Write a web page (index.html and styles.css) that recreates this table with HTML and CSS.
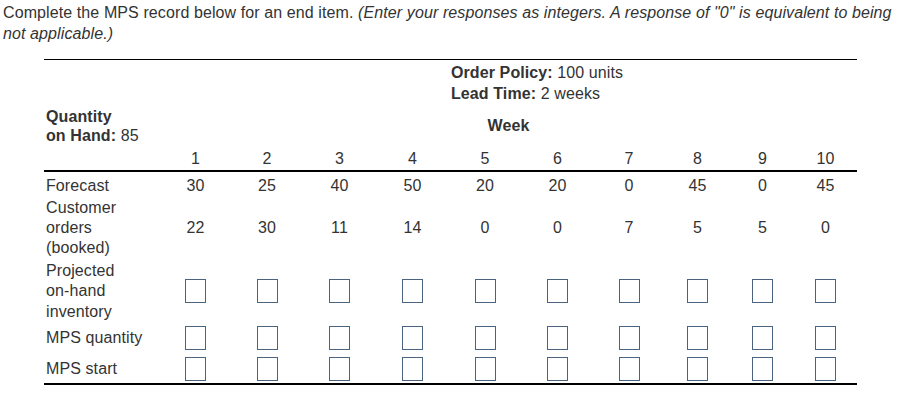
FILE: index.html
```html
<!DOCTYPE html>
<html>
<head>
<meta charset="utf-8">
<link rel="stylesheet" href="styles.css">
</head>
<body>
<p class="intro">Complete the MPS record below for an end item. <em>(Enter your responses as integers. A response of "0" is equivalent to being not applicable.)</em></p>
<table class="mps">
  <colgroup>
    <col class="c-label">
    <col class="c71"><col class="c72"><col class="c73"><col class="c73">
    <col class="c72"><col class="c73"><col class="c70"><col class="c67">
    <col class="c63"><col class="c63">
  </colgroup>
  <tr class="r-policy">
    <td></td>
    <td colspan="4"></td>
    <td colspan="6" class="policy"><b>Order Policy:</b> 100 units<br><b>Lead Time:</b> 2 weeks</td>
  </tr>
  <tr class="r-week">
    <td class="label"><b>Quantity<br>on Hand:</b> 85</td>
    <td colspan="10" class="week"><b>Week</b></td>
  </tr>
  <tr class="r-nums">
    <td></td>
    <td>1</td><td>2</td><td>3</td><td>4</td><td>5</td><td>6</td><td>7</td><td>8</td><td>9</td><td>10</td>
  </tr>
  <tr class="r-forecast">
    <td class="label">Forecast</td>
    <td>30</td><td>25</td><td>40</td><td>50</td><td>20</td><td>20</td><td>0</td><td>45</td><td>0</td><td>45</td>
  </tr>
  <tr class="r-orders">
    <td class="label">Customer<br>orders<br>(booked)</td>
    <td>22</td><td>30</td><td>11</td><td>14</td><td>0</td><td>0</td><td>7</td><td>5</td><td>5</td><td>0</td>
  </tr>
  <tr class="r-proj">
    <td class="label">Projected<br>on-hand<br>inventory</td>
    <td><span class="box"></span></td><td><span class="box"></span></td><td><span class="box"></span></td><td><span class="box"></span></td><td><span class="box"></span></td><td><span class="box"></span></td><td><span class="box"></span></td><td><span class="box"></span></td><td><span class="box"></span></td><td><span class="box"></span></td>
  </tr>
  <tr class="r-box">
    <td class="label">MPS quantity</td>
    <td><span class="box"></span></td><td><span class="box"></span></td><td><span class="box"></span></td><td><span class="box"></span></td><td><span class="box"></span></td><td><span class="box"></span></td><td><span class="box"></span></td><td><span class="box"></span></td><td><span class="box"></span></td><td><span class="box"></span></td>
  </tr>
  <tr class="r-box r-last">
    <td class="label">MPS start</td>
    <td><span class="box"></span></td><td><span class="box"></span></td><td><span class="box"></span></td><td><span class="box"></span></td><td><span class="box"></span></td><td><span class="box"></span></td><td><span class="box"></span></td><td><span class="box"></span></td><td><span class="box"></span></td><td><span class="box"></span></td>
  </tr>
</table>
</body>
</html>
```

FILE: styles.css
```css
html, body {
  margin: 0;
  padding: 0;
  background: #ffffff;
}
body {
  font-family: "Liberation Sans", Arial, sans-serif;
  font-size: 16px;
  color: #333333;
  letter-spacing: 0.1px;
}
.intro {
  margin: 0;
  padding: 2px 3px 0 3px;
  line-height: 21px;
}
.mps {
  margin: 15px 0 0 44px;
  width: 813px;
  table-layout: fixed;
  border-collapse: collapse;
  border-top: 1px solid #000;
  border-bottom: 2px solid #000;
  line-height: 20px;
}
.c-label { width: 116px; }
.c71 { width: 71px; }
.c72 { width: 72px; }
.c73 { width: 73px; }
.c70 { width: 70px; }
.c67 { width: 67px; }
.c63 { width: 63px; }
.mps td {
  padding: 1px 2px;
  text-align: center;
  vertical-align: middle;
}
.mps td.label {
  text-align: left;
}
.mps td.policy {
  text-align: left;
  padding: 3px 2px 2px 2px;
  line-height: 20.5px;
}
.r-week td.label {
  line-height: 19px;
}
.r-nums td {
  border-bottom: 2px solid #000;
  padding-top: 3px;
}
.r-forecast td {
  padding-top: 4px;
  padding-bottom: 1px;
}
.r-orders td {
  padding-top: 1px;
  padding-bottom: 2px;
}
.r-proj td {
  padding-top: 1px;
  padding-bottom: 1px;
  line-height: 20.3px;
}
.box {
  display: inline-block;
  width: 19px;
  height: 22px;
  border: 1px solid #4a6480;
  vertical-align: middle;
}
.r-box td {
  padding-top: 3px;
  padding-bottom: 4px;
}
.r-box.r-last td {
  padding-bottom: 2px;
}
```
